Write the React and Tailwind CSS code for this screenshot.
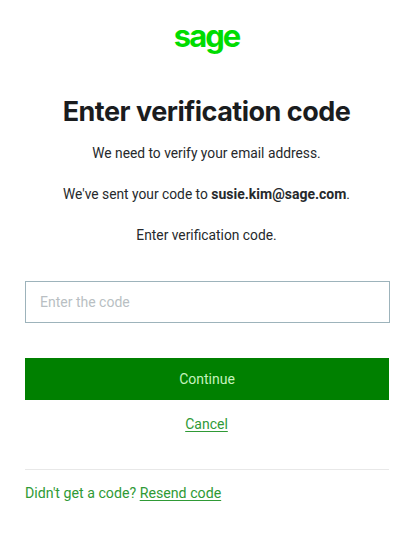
export default function App() {
  return (
    <div className="w-[413px] h-[540px] bg-white overflow-hidden px-[25px] pt-[18px] font-['Roboto','Liberation_Sans',sans-serif] text-[#26292c]">
      <div className="flex justify-center h-[36px]">
        <span className="font-['Inter',sans-serif] font-bold text-[31px] leading-[36px] tracking-[-2px] text-[#00dc00]">sage</span>
      </div>
      <h1 className="mt-[41px] text-center text-[27px] leading-[34px] font-bold text-[#1a1c1e] font-['Inter',sans-serif] tracking-[-0.5px]">Enter verification code</h1>
      <p className="mt-[14px] text-center text-[13.8px] leading-[20px]">We need to verify your email address.</p>
      <p className="mt-[21px] text-center text-[13.8px] leading-[20px]">We've sent your code to <b className="font-bold text-[14px]">susie.kim@sage.com</b>.</p>
      <p className="mt-[21px] text-center text-[13.8px] leading-[20px]">Enter verification code.</p>
      <input
        readOnly
        placeholder="Enter the code"
        className="mt-[36px] block w-[365px] h-[42px] border border-[#9db3bb] bg-white px-[14px] text-[14px] outline-none placeholder:text-[#b9bfc3]"
      />
      <button className="mt-[35px] block w-[364px] h-[42px] bg-[#008000] text-[#c4f2bd] text-[14px] text-center">Continue</button>
      <div className="mt-[14px] text-center text-[14px] leading-[20px] text-[#2f9a36]">
        <a className="underline underline-offset-2">Cancel</a>
      </div>
      <div className="mt-[35px] w-[364px] h-px bg-[#e8e8e8]"></div>
      <p className="mt-[13px] text-[14.2px] leading-[20px] text-[#2f9a36]">
        Didn't get a code? <a className="underline underline-offset-2">Resend code</a>
      </p>
    </div>
  );
}
